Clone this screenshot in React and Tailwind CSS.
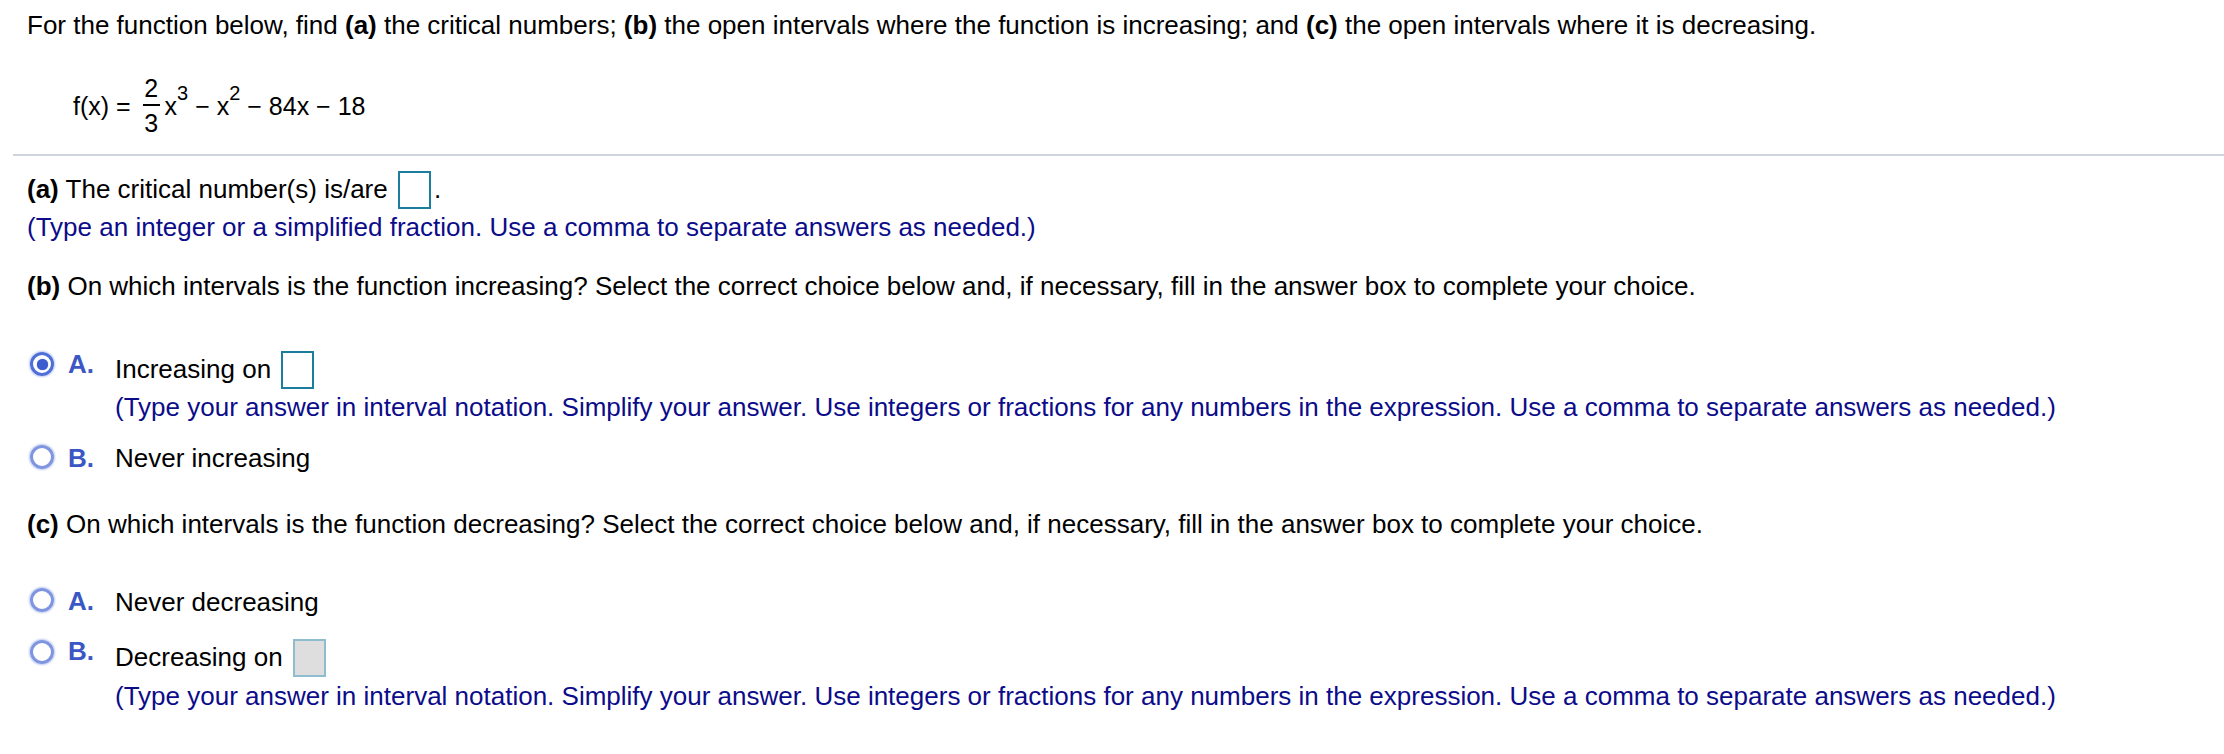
const HINT = 'text-[#0c0c8a]';

function AnswerBox({ disabled }) {
  return (
    <span
      className={`inline-block w-[33px] h-[38px] ml-[3px] align-[-11px] border-2 ${
        disabled ? 'bg-[#dedede] border-[#8fbdcf]' : 'bg-white border-[#1c7d9e]'
      }`}
    />
  );
}

function Radio({ checked }) {
  return (
    <div
      className={`w-[24px] h-[24px] rounded-full border-[3px] flex items-center justify-center shadow-[0_0_2px_1px_rgba(110,135,220,0.45)] ${
        checked ? 'border-[#4f6fd8]' : 'border-[#7f95e0]'
      }`}
    >
      {checked && <div className="w-[11px] h-[11px] rounded-full bg-[#3d5dcf] shadow-[0_0_1px_#3d5dcf]" />}
    </div>
  );
}

function Option({ letter, checked, radioTop, contentTop, className, children }) {
  return (
    <div className={`flex items-start ${className}`}>
      <div className={`ml-[30px] ${radioTop}`}>
        <Radio checked={checked} />
      </div>
      <div className="ml-[14px] w-[47px] h-[30px] font-bold text-[#3b57c4]">{letter}</div>
      <div className={contentTop}>{children}</div>
    </div>
  );
}

export default function App() {
  return (
    <div className="w-[2224px] h-[754px] bg-white text-black text-[26px] leading-[30px] font-['Liberation_Sans',Arial,sans-serif]">
      {/* enunciado */}
      <div className="pt-[10px] pl-[27px] h-[40px]">
        For the function below, find <b>(a)</b> the critical numbers; <b>(b)</b> the open intervals where the
        function is increasing; and <b>(c)</b> the open intervals where it is decreasing.
      </div>

      {/* formula */}
      <div className="h-[114px] pt-[39px] pl-[73px] text-[25px] leading-[30px] whitespace-nowrap">
        f(x) ={' '}
        <span className="inline-flex flex-col items-center align-[18px] mx-[5px] w-[17px]">
          <span className="leading-[18px]">2</span>
          <span className="mt-[7px] w-full h-[2px] bg-black" />
          <span className="mt-[8px] leading-[18px]">3</span>
        </span>
        x<span className="text-[20px] leading-none align-[15px]">3</span> − x
        <span className="text-[20px] leading-none align-[15px]">2</span> − 84x − 18
      </div>

      <div className="ml-[13px] h-[2px] bg-[#cfd3de]" />

      {/* (a) */}
      <div className="mt-[15px] pl-[27px] h-[30px] whitespace-nowrap">
        <b>(a)</b> The critical number(s) is/are <AnswerBox />
        <span className="ml-[3px]">.</span>
      </div>
      <div className={`mt-[11px] pl-[27px] h-[30px] ${HINT}`}>
        (Type an integer or a simplified fraction. Use a comma to separate answers as needed.)
      </div>

      {/* (b) */}
      <div className="mt-[29px] pl-[27px] h-[30px]">
        <b>(b)</b> On which intervals is the function increasing? Select the correct choice below and, if
        necessary, fill in the answer box to complete your choice.
      </div>

      <Option letter="A." checked radioTop="mt-[3px]" contentTop="mt-[2px]" className="mt-[48px]">
        <div className="h-[30px] whitespace-nowrap">
          Increasing on <AnswerBox />
        </div>
        <div className={`mt-[11px] h-[30px] ${HINT}`}>
          (Type your answer in interval notation. Simplify your answer. Use integers or fractions for any
          numbers in the expression. Use a comma to separate answers as needed.)
        </div>
      </Option>

      <Option letter="B." radioTop="mt-[2px]" contentTop="" className="mt-[21px]">
        <div className="h-[30px]">Never increasing</div>
      </Option>

      {/* (c) */}
      <div className="mt-[36px] pl-[27px] h-[30px]">
        <b>(c)</b> On which intervals is the function decreasing? Select the correct choice below and, if
        necessary, fill in the answer box to complete your choice.
      </div>

      <Option letter="A." radioTop="mt-[2px]" contentTop="mt-[1px]" className="mt-[47px]">
        <div className="h-[30px]">Never decreasing</div>
      </Option>

      <Option letter="B." radioTop="mt-[4px]" contentTop="mt-[3px]" className="mt-[19px]">
        <div className="h-[30px] whitespace-nowrap">
          Decreasing on <AnswerBox disabled />
        </div>
        <div className={`mt-[12px] h-[30px] ${HINT}`}>
          (Type your answer in interval notation. Simplify your answer. Use integers or fractions for any
          numbers in the expression. Use a comma to separate answers as needed.)
        </div>
      </Option>
    </div>
  );
}
